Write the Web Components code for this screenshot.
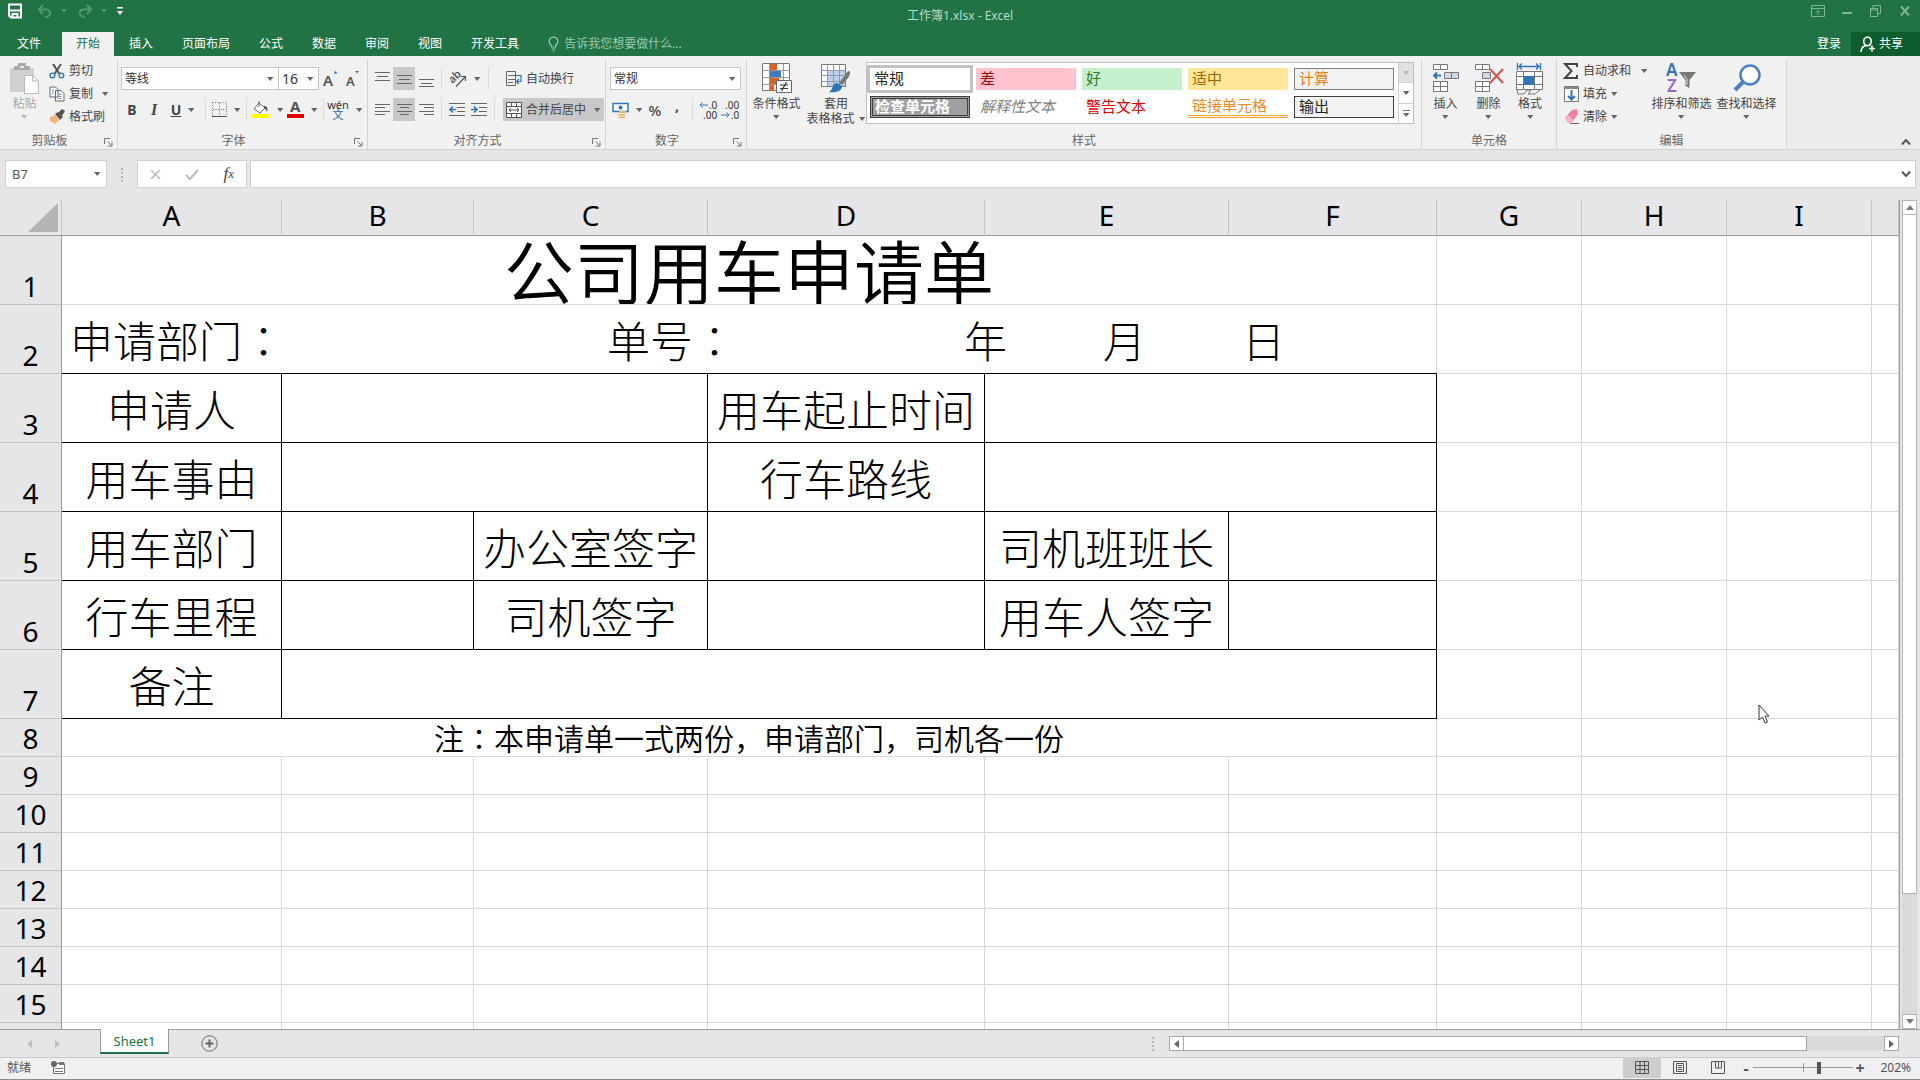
<!DOCTYPE html>
<html lang="zh-CN">
<head>
<meta charset="utf-8">
<title>工作簿1.xlsx - Excel</title>
<style>
  html, body { margin: 0; height: 100%; overflow: hidden; }
  body { font: 12px/16px "Noto Sans", "Noto Sans CJK SC", sans-serif; color: #444; background: #e6e6e6; }
</style>
</head>
<body>
<excel-app></excel-app>
<script>
const BASE = `
  *, *::before, *::after { box-sizing: border-box; }
  button, input, select { font: inherit; color: inherit; border: 0; background: none; padding: 0; margin: 0; border-radius: 0; outline: 0; }
  button { display: flex; align-items: center; justify-content: center; white-space: nowrap; flex: none; }
  svg { display: block; flex: none; }
`;

function define(name, css, html, init) {
  const tpl = document.createElement('template');
  tpl.innerHTML = `<style>${BASE}${css}</style>` + (typeof html === 'string' ? html : '');
  customElements.define(name, class extends HTMLElement {
    connectedCallback() {
      if (this.shadowRoot) return;
      const root = this.attachShadow({ mode: 'open' });
      root.append(tpl.content.cloneNode(true));
      if (typeof html === 'function') root.innerHTML += html(this);
      if (init) init(root, this);
    }
  });
}

/* name: [width, height, markup] */
const G = '#666', B = '#2f75b5';
const line = (d, c = G, w = 1) => `<path d="${d}" fill="none" stroke="${c}" stroke-width="${w}"/>`;
const glyph = (t, x, y, s, c, w = 700) => `<text x="${x}" y="${y}" fill="${c}" style="font:${w} ${s}px 'Noto Sans',sans-serif">${t}</text>`;
const ICONS = {
  save: [16, 16, `<path d="M2 1.5h12v13H4l-2-2z" fill="none" stroke="#fff" stroke-width="2"/><path d="M2 7.5h12M5.5 15v-4h5v4" fill="none" stroke="#fff" stroke-width="2"/>`],
  undo: [16, 14, line('M2 5.5h7.5a3.6 3.6 0 0 1 0 7.2H8', '#4f9a70', 2) + line('M6 1 1.8 5.5 6 10', '#4f9a70', 2)],
  redo: [16, 14, line('M14 5.5H6.5a3.6 3.6 0 0 0 0 7.2H8', '#4f9a70', 2) + line('M10 1l4.2 4.5L10 10', '#4f9a70', 2)],
  caretQ: [7, 4, `<path d="M0 0h6L3 4z" fill="#4f9a70"/>`],
  qat: [8, 8, `<path d="M1 0h6v1.5H1zM1 4h6L4 8z" fill="#fff"/>`],
  caret: [7, 4, `<path d="M0 0h6.400L3.200 4z" fill="#666"/>`],
  caretS: [7, 4, `<path d="M0 0h6.400L3.200 4z" fill="#bbb"/>`],
  caretU: [8, 5, `<path d="M0 5h8L4 0z" fill="#777"/>`],
  caretD: [8, 5, `<path d="M0 0h8L4 5z" fill="#777"/>`],
  caretL: [5, 8, `<path d="M5 0v8L0 4z" fill="#666"/>`],
  caretR: [5, 8, `<path d="M0 0v8l5-4z" fill="#666"/>`],
  navL: [5, 8, `<path d="M5 0v8L0 4z" fill="#bdbdbd"/>`],
  navR: [5, 8, `<path d="M0 0v8l5-4z" fill="#bdbdbd"/>`],
  ribopt: [14, 12, line('M.5.5h13v11H.5zM.5 3.5h13M7 10V5.5M5 7.5l2-2 2 2', '#7fb595')],
  min: [10, 12, line('M0 8h10', '#7fb595', 2)],
  restore: [11, 12, line('M.5 3.5h7v8h-7zM3 3V.5h7.5v8H8M.5 5h7', '#7fb595')],
  close: [10, 12, line('M1 1.5l8 9M9 1.5l-8 9', '#7fb595', 2)],
  bulb: [11, 16, line('M5.500 1a4.300 4.300 0 0 0-2.500 7.800l.5 2.200h4l.5-2.200A4.300 4.300 0 0 0 5.500 1zM3.500 13h4M4.500 15h2', '#9cc9ae', 1.2)],
  person: [16, 18, line('M7.500 2a3.800 4.400 0 1 1-.01 0zM1 17c.3-4.500 3-6.500 6-6.500M12 10.500v6M9 13.500h6', '#fff', 1.6)],
  paste: [30, 32, `<path d="M0 5h24v24H0z" fill="#d2cfd4"/><path d="M4 7V3h4V0h8v3h4v4z" fill="#aaa"/><path d="M10 3h4v2h-4z" fill="#eee"/><path d="M14.500 12.500h8l6 5.500v12.500h-14z" fill="#fff" stroke="#bbb"/><path d="M22.500 12.500V18h6" fill="none" stroke="#bbb"/>`],
  cut: [16, 16, line('M4 1l6.500 10M12 1 5.500 11', '#555', 2) + line('M1 12.500a2.400 2.400 0 1 0 4.800 0 2.400 2.400 0 1 0-4.800 0M10 12.500a2.400 2.400 0 1 0 4.800 0 2.400 2.400 0 1 0-4.800 0', B, 1.300)],
  copy: [16, 16, `<path d="M1 1h5.500L9 3.500V11H1zM6.500 4.500H12l3 3V15H6.500z" fill="#fff" stroke="#666"/>` + line('M3 4h2M3 6h2M3 8h2M8.500 8.500h4M8.500 10.500h4M8.500 12.500h4', '#7a9cc4')],
  brush: [16, 16, `<path d="M1 8l5-2 4 5-4 4-5-3z" fill="#f2b579"/><path d="M6 5l3-2 5 5-3 3z" fill="#555"/><path d="M9 4l4-4 3 2-3 5z" fill="#555"/>`],
  Aup: [15, 18, `<path d="M10.500 3.500l2-2.500 2 2.500z" fill="${B}"/>` + glyph('A', 0, 16, 15, '#555', 600)],
  Adn: [15, 18, `<path d="M10 1h4l-2 2.500z" fill="${B}"/>` + glyph('A', 1, 16, 13, '#555', 600)],
  border: [15, 15, `<path d="M.5.5h14v14H.5zM7.500 1v13M1 7.500h13" fill="none" stroke="#777" stroke-dasharray="1 1.500"/><path d="M0 14.500h15" stroke="#555"/>`],
  fill: [18, 18, `<path d="M0 13h17v4H0z" fill="#ffff00"/><path d="M7 2l6 5-5 5-6-4z" fill="#fff" stroke="#666"/><path d="M7 0v6" stroke="#666"/><path d="M12 5c3 0 4 2 3 6-1-2-1-3-3-4z" fill="#555"/>`],
  color: [17, 18, `<path d="M0 13h17v4H0z" fill="#e00000"/>` + glyph('A', 3, 11, 15, '#555')],
  alT: [15, 16, line('M0 1.500h15M2 5.500h11M0 9.500h15')],
  alM: [15, 16, line('M0 4.500h15M2 8.500h11M0 12.500h15')],
  alB: [15, 16, line('M0 8.500h15M2 12.500h11M0 15.500h15')],
  left: [15, 13, line('M0 1.500h15M0 4.500h10M0 8.500h15M0 11.500h10')],
  mid: [15, 13, line('M0 1.500h15M3 4.500h9M0 8.500h15M3 11.500h9')],
  right: [15, 13, line('M0 1.500h15M5 4.500h10M0 8.500h15M5 11.500h10')],
  orient: [17, 16, `<g transform="rotate(-45 6 8)">${glyph('ab', 0, 9, 11, '#555', 600)}</g>` + line('M6 15.500 15 6M15.500 10V5.500H11', '#555', 1.200)],
  outd: [16, 13, line('M0 .5h16M8 4.500h8M8 8.500h8M0 12.500h16') + line('M7 6.500H1M4 3.500 1 6.500l3 3', B, 1.600)],
  ind: [16, 13, line('M0 .5h16M8 4.500h8M8 8.500h8M0 12.500h16') + line('M0 6.500h6M3 3.500l3 3-3 3', B, 1.600)],
  wrap: [16, 16, line('M.5.5h9v14h-9zM2 4.500h10M2 8.500h8M2 11.500h5') + line('M12 4.500h3v6h-4M13 8l-2.500 2.500L13 13', B, 1.200)],
  merge: [16, 16, `<path d="M.5.5h15v15H.5z" fill="#fff" stroke="#555"/>` + line('M.5 4.500h15M.5 11.500h15M5.500.5v4M10.500.5v4M5.500 11.500v4M10.500 11.500v4M3 8h10M5 6 3 8l2 2M11 6l2 2-2 2', '#555')],
  money: [17, 16, `<path d="M1 1.500h15v8H1z" fill="#fff" stroke="${B}" stroke-width="1.500"/><circle cx="8.500" cy="5.500" r="2" fill="${B}"/><path d="M7 9h7v2H7zM6 12h7v1.500H6zM7 14.500h6V16H7z" fill="#f0b060"/>`],
  incd: [9, 6, line('M9 3H1M3.500.5 1 3l2.500 2.500', B)],
  decd: [9, 6, line('M0 3h8M5.500.5 8 3 5.500 5.500', B)],
  cond: [30, 30, `<path d="M.5.5h27v27H.5z" fill="#fff" stroke="#777"/>` + line('M.5 7.500h27M.5 14.500h27M.5 21.500h27M7.500.5v27M14.500.5v27M21.500.5v27', '#999') + `<path d="M8 1h7v6H8zM8 15h9v6H8zM8 22h4v6H8z" fill="#d9622b"/><path d="M8 8h11v6H8z" fill="#3f7fc0"/><path d="M14.500 17.500h15v12h-15z" fill="#fff" stroke="#666"/>` + line('M18 22h8M18 25.500h8M24.500 19l-5 9', '#333', 1.200)],
  tblfmt: [30, 30, `<path d="M.5 1.500h24v22H.5z" fill="#fff" stroke="#777"/><path d="M7 7h17v16H7z" fill="#bdd0ea"/>` + line('M.5 7.500h24M.5 12.500h24M.5 18.500h24M6.500 1.500v22M12.500 1.500v22M18.500 1.500v22', '#8a9ab0') + `<path d="M28 8c2 1 1 4-1 7l-6 7-3-2 6-8c1-2 3-4 4-4z" fill="#777"/><path d="M16 20l5 3c0 5-5 7-13 6 4-2 3-8 8-9z" fill="${B}"/>`],
  insert: [28, 29, `<path d="M1.500 1.500h14v5h-14zM1.500 18.500h14v10h-14z" fill="#fff" stroke="#777"/>` + line('M8.500 1.500v5M8.500 18.500v10M1.500 23.500h14', '#777') + `<path d="M12.500 9.500h14v6h-14z" fill="#cfd8e4" stroke="#777"/>` + line('M19.500 9.500v6', '#777') + line('M9 12.500H2M5 9.500l-3 3 3 3', B, 2)],
  del: [30, 29, `<path d="M1.500 1.500h14v5h-14zM1.500 18.500h14v10h-14z" fill="#fff" stroke="#777"/>` + line('M8.500 1.500v5M8.500 18.500v10M1.500 23.500h14', '#777') + `<path d="M8.500 9.500h8v6h-8z" fill="#cfd8e4" stroke="#777"/>` + line('M16 6l13 14M29 6 16 20', '#dc5340', 2)],
  format: [28, 32, line('M1.500 0v7M24.500 0v7M3 3.500h20M6 .5l-3 3 3 3M20 .5l3 3-3 3', B, 1.300) + `<path d="M.5 8.500h26v18H.5z" fill="#fff" stroke="#777"/>` + line('M.5 13.500h26M.5 21.500h26M7.500 8.500v18M18.500 8.500v18M1 27l1 4h6l3-4h4l-3 4h7l5-4', '#777') + `<path d="M8 13h10v9H8z" fill="${B}"/>`],
  sum: [16, 18, line('M14 5V2H2l6.500 7L2 16h12v-3', '#444', 2)],
  filldn: [15, 16, `<path d="M.5.5h14v15H.5z" fill="#fff" stroke="#777"/><path d="M1 1h13v2H1z" fill="#888"/>` + line('M7.500 4v9.500M4 10 7.500 13.500 11 10', B, 2)],
  erase: [15, 16, `<path d="M8 1l5-1 1 5-6 8H4l-3-4z" fill="#ee7fa2"/><path d="M1 9l4-3 4 5-2 3H4z" fill="#f5b3c8"/>` + line('M6 14.500h9', '#666')],
  sort: [32, 32, glyph('A', 0, 13, 17, B, 600) + glyph('Z', 1, 29, 17, '#9467bd', 600) + `<path d="M13 9h17l-6.500 8v8l-4-2v-6z" fill="#777"/>` + line('M18 12l3 4v6', '#ddd')],
  find: [30, 32, `<circle cx="18" cy="12" r="9.500" fill="#fff" stroke="#4a80c0" stroke-width="2.500"/>` + line('M11.500 18.500 3 27', '#4a80c0', 4)],
  launch: [9, 9, line('M.5 6V.5H6M3.500 3.500l4 4M8 4v4H4', '#777')],
  up: [10, 6, line('M1 5.500 5 1l4 4.500', '#555', 2)],
  down: [10, 6, line('M1 .5 5 5 9 .5', '#555', 2)],
  x: [11, 11, line('M1 1l9 9M10 1l-9 9', '#bbb', 1.600)],
  check: [14, 11, line('M1 6l4 4L13 1', '#bbb', 2)],
  plus: [17, 17, `<circle cx="8.500" cy="8.500" r="7.700" fill="none" stroke="#666"/>` + line('M8.500 4.500v8M4.500 8.500h8', '#666', 2)],
  dots: [3, 15, `<path d="M0 1h2v2H0zM0 5h2v2H0zM0 9h2v2H0zM0 13h2v2H0z" fill="#b5b5b5"/>`],
  macro: [14, 13, `<path d="M2.500 2.500h11v10h-11z" fill="#fff" stroke="#777"/><path d="M8 1h5v3H8z" fill="#777"/>` + line('M4 7.500h8M4 10.500h8', '#777') + `<circle cx="3" cy="3" r="3" fill="#666"/>`],
  vNorm: [14, 13, line('M.5.5h13v12H.5zM.5 4.500h13M.5 8.500h13M5 .5v12M9.500.5v12', '#555')],
  vPage: [14, 13, line('M.5.5h13v12H.5zM3.500 2.500h7v8h-7zM5 4.500h4M5 6.500h4M5 8.500h4', '#555')],
  vBreak: [14, 13, line('M.5.5h13v12H.5zM4.500.5v6.500h6V.5M7.500.5v6', '#555')],
  cursor: [12, 20, `<path d="M1 1v15l3.500-3 2.500 6 2.500-1-2.500-6H11z" fill="#fff" stroke="#333"/>`],
  all: [30, 29, `<path d="M30 0v29H0z" fill="#b4b4b6"/>`]
};
define('x-icon', ':host{display:block;flex:none}', el => {
  const [w, h, m] = ICONS[el.getAttribute('name')];
  return `<svg width="${w}" height="${h}" viewBox="0 0 ${w} ${h}" aria-hidden="true">${m}</svg>`;
});
const ic = n => `<x-icon name="${n}"></x-icon>`;

define('title-bar', `
  :host { display: grid; grid-template-columns: 1fr auto 1fr; height: 32px; color: #b9dcc6; }
  .q { display: flex; align-items: center; height: 22px; padding-left: 7px; }
  .q button { height: 22px; }
  .s { width: 16px; margin-right: 13px; } .u { gap: 8px; width: 32px; margin-right: 8px; }
  .t { padding-top: 8px; }
  .w { display: flex; justify-content: flex-end; height: 22px; padding-right: 1px; }
  .w button { width: 29px; height: 22px; }`,
  `<div class="q"><button class="s" aria-label="保存">${ic('save')}</button>
   <button class="u" aria-label="撤消">${ic('undo')}${ic('caretQ')}</button>
   <button class="u" aria-label="恢复">${ic('redo')}${ic('caretQ')}</button>
   <button aria-label="自定义快速访问工具栏">${ic('qat')}</button></div>
   <div class="t">工作簿1.xlsx - Excel</div>
   <div class="w"><button aria-label="功能区显示选项">${ic('ribopt')}</button><button aria-label="最小化">${ic('min')}</button><button aria-label="还原">${ic('restore')}</button><button aria-label="关闭">${ic('close')}</button></div>`);

define('ribbon-tabs', `
  :host { display: flex; height: 24px; gap: 1px; color: #fff; }
  button { padding: 0 14px 1px; height: 24px; }
  .file { width: 58px; margin-right: 3px; }
  .on { background: #f1f1f1; color: #217346; }
  label { display: flex; align-items: center; gap: 5px; flex: 1; margin-left: 14px; }
  input { width: 240px; color: #9cc9ae; } input::placeholder { color: #9cc9ae; opacity: 1; }
  .share { background: #0f5c2f; gap: 3px; width: 69px; padding: 0 8px 1px 0; }
  .login { padding: 0 9px 1px; }`,
  `<button class="file">文件</button><button class="on">开始</button><button>插入</button><button>页面布局</button><button>公式</button><button>数据</button><button>审阅</button><button>视图</button><button>开发工具</button>
   <label>${ic('bulb')}<input aria-label="操作说明搜索" placeholder="告诉我您想要做什么..."></label>
   <button class="login">登录</button><button class="share">${ic('person')}共享</button>`);

define('ribbon-group', `
  :host { display: flex; flex-direction: column; flex: none; height: 93px; padding-bottom: 1px; }
  .body { height: 73px; display: flex; }
  .foot { display: grid; grid-template-columns: 1fr 18px; align-items: center; text-align: center; height: 18px; color: #666; padding-bottom: 1px; }
  .foot.p { grid-template-columns: 1fr; }
  .foot button { height: 14px; padding-top: 4px; }
  .in { border-right: 1px solid #d4d4d6; margin: 3px 0 4px; flex: 1; display: flex; flex-direction: column; }`,
  el => {
    const l = el.getAttribute('label'), d = el.hasAttribute('launcher');
    return `<div class="in"><div class="body"><slot></slot></div><div class="foot ${d ? '' : 'p'}"><span>${l}</span>${d ? `<button aria-label="${l}设置">${ic('launch')}</button>` : ''}</div></div>`;
  });

/* Large button: icon over text, with a caret below or beside the last line */
define('big-button', `
  :host { display: block; flex: none; }
  button { flex-direction: column; justify-content: flex-start; width: 100%; height: 72px; padding-top: 4px; color: inherit; }
  .i { height: 33px; display: flex; align-items: flex-start; justify-content: center; }
  .c { height: 12px; display: flex; align-items: center; } .l { display: flex; align-items: center; gap: 4px; height: 15px; }`,
  el => {
    const [a, b] = el.getAttribute('label').split('|');
    return `<button><span class="i">${ic(el.getAttribute('icon'))}</span><span class="l">${a}</span>${b ? `<span class="l">${b}${ic('caret')}</span>` : `<span class="c">${ic(el.hasAttribute('dim') ? 'caretS' : 'caret')}</span>`}</button>`;
  });

define('row-button', `
  :host { display: block; } button { gap: 4px; height: 23px; } .i { width: 16px; display: flex; justify-content: center; } x-icon.c { margin-left: var(--cg, 0); }`,
  el => `<button><span class="i">${ic(el.getAttribute('icon'))}</span>${el.getAttribute('label')}${el.hasAttribute('menu') ? '<x-icon class="c" name="caret"></x-icon>' : ''}</button>`);

define('drop-box', `
  :host { display: flex; align-items: center; height: 23px; background: #fff; border: 1px solid #c6c6c8; padding-right: 4px; }
  select { appearance: none; flex: 1; min-width: 0; height: 21px; padding-left: 3px; font-size: var(--fs, 12px); color: #333; }`,
  el => `<select aria-label="${el.getAttribute('name')}"><option>${el.getAttribute('value')}</option></select>${ic('caret')}`);

/* Small tool: icon or text glyph, optional caret */
define('tool-button', `
  :host { display: block; flex: none; width: 22px; }
  button { width: 100%; height: 23px; gap: 7px; } :host([on]) button { background: #c8c8ca; }
  .b { font: bold 14px/20px "Noto Sans"; color: #444; } .i { font-family: "Liberation Serif"; font-size: 16px; font-style: italic; } .u { text-decoration: underline; }
  .p { font-size: 15px; font-weight: 500; } .k { padding-bottom: 8px; } .n { display: flex; flex-direction: column; font: 10px/10px "Noto Sans", "Noto Sans CJK SC"; color: #333; align-items: center; }
  .n span { display: flex; align-items: center; gap: 1px; } .r { align-items: flex-end; } .w { font-size: 11px; } .w span { color: #2f5fa5; }`,
  el => {
    const g = { B: '<span class="b">B</span>', I: '<span class="b i">I</span>', U: '<span class="b u">U</span>', pct: '<span class="b p">%</span>', comma: '<span class="b k">,</span>',
      inc: `<span class="n r"><span>${ic('incd')}.0</span><span>.00</span></span>`, dec: `<span class="n r"><span>.00</span><span>${ic('decd')}.0</span></span>`,
      wen: '<span class="n w">wén<span>文</span></span>' }[el.getAttribute('icon')];
    return `<button aria-label="${el.getAttribute('label')}">${g || ic(el.getAttribute('icon'))}${el.hasAttribute('menu') ? ic('caret') : ''}</button>`;
  });

define('style-gallery', `
  :host { display: flex; height: 62px; background: #fff; border: 1px solid #c0c0c4; margin-top: 3px; flex: none; }
  .g { display: grid; grid-template-columns: repeat(5, 100px); align-content: start; gap: 6px; padding: 5px 4px 4px 3px; }
  .g button { height: 22px; justify-content: flex-start; padding: 0 0 2px 4px; font-size: 15px; color: #222; }
  .sel { outline: 3px solid #c2c2c4; }
  .bad { background: #ffc3cf; } .g .bad { color: #9c0006; } .good { background: #c6efce; } .g .good { color: #2f7a2f; }
  .neu { background: #ffe699; } .g .neu { color: #9c6500; } .calc { background: #f2f2f2; }
  .g .calc { color: #ee7d15; border: 1px solid #7f7f7f; } .g .chk { background: #a0a0a2; border: 3px double #3f3f3f; color: #fff; font-weight: 700; padding-left: 2px; }
  .g .exp { font-style: italic; color: #7f7f7f; } .g .warn { color: #e00000; } .g .lnk { color: #ee8a2a; border-bottom: 3px double #f0a030; }
  .g .out { background: #f2f2f2; border: 1px solid #3f3f3f; }
  .s { display: flex; flex-direction: column; width: 15px; border-left: 1px solid #d0d0d2; }
  .s button { flex: 1; border-bottom: 1px solid #d0d0d2; flex-direction: column; gap: 2px; } .s button:first-child { background: #e1e1e3; } .s button:last-child { border: 0; }
  i { width: 7px; height: 1px; background: #777; }`,
  `<div class="g"><button class="sel">常规</button><button class="bad">差</button><button class="good">好</button><button class="neu">适中</button><button class="calc">计算</button>
   <button class="chk">检查单元格</button><button class="exp">解释性文本</button><button class="warn">警告文本</button><button class="lnk">链接单元格</button><button class="out">输出</button></div>
   <div class="s"><button aria-label="上一行">${ic('caretS')}</button><button aria-label="下一行">${ic('caret')}</button><button aria-label="其他"><i></i>${ic('caret')}</button></div>`);

const sep = m => `<i class="sep" style="margin:0 ${m}"></i>`;
define('excel-ribbon', `
  :host { display: flex; background: #f1f1f2; border-bottom: 1px solid #d0d0d3; height: 94px; color: #444; }
  .col { display: flex; flex-direction: column; } .row { display: flex; align-items: center; height: 23px; }
  .two { gap: 8px; padding-top: 8px; } .sep { width: 1px; height: 23px; background: #dcdcde; flex: none; }
  .clip { width: 118px; } .font { width: 250px; } .align { width: 238px; } .num { width: 141px; } .sty { width: 675px; } .cells { width: 135px; } .edit { width: 230px; }
  .merge { background: #c8c8ca; height: 23px; width: 101px; gap: 4px; justify-content: flex-start; padding-left: 3px; margin-left: 4px; }
  .wr { gap: 4px; margin-left: 7px; }
  .end { flex: 1; display: flex; justify-content: flex-end; align-items: flex-end; padding: 0 9px 4px; background: #ececed; }`,
  `<ribbon-group class="clip" label="剪贴板" launcher>
     <big-button style="width:49px;color:#aaa" icon="paste" label="粘贴" dim></big-button>
     <div class="col"><row-button icon="cut" label="剪切"></row-button><row-button icon="copy" label="复制" menu style="--cg:5px"></row-button><row-button icon="brush" label="格式刷"></row-button></div>
   </ribbon-group>
   <ribbon-group class="font" label="字体" launcher><div class="col two" style="padding-left:3px">
     <div class="row"><drop-box name="字体" value="等线" style="width:158px"></drop-box><drop-box name="字号" value="16" style="width:41px;--fs:14px;margin-left:-1px"></drop-box><tool-button icon="Aup" label="增大字号"></tool-button><tool-button icon="Adn" label="减小字号"></tool-button></div>
     <div class="row"><tool-button icon="B" label="加粗"></tool-button><tool-button icon="I" label="倾斜"></tool-button><tool-button icon="U" label="下划线" menu style="width:36px"></tool-button>${sep('4px')}<tool-button icon="border" label="边框" menu style="width:32px"></tool-button>${sep('4px')}<tool-button icon="fill" label="填充颜色" menu style="width:34px"></tool-button><tool-button icon="color" label="字体颜色" menu style="width:34px"></tool-button>${sep('4px')}<tool-button icon="wen" label="拼音指南" menu style="width:34px"></tool-button></div>
   </div></ribbon-group>
   <ribbon-group class="align" label="对齐方式" launcher><div class="col two" style="padding-left:3px">
     <div class="row"><tool-button icon="alT" label="顶端对齐"></tool-button><tool-button icon="alM" label="垂直居中" on></tool-button><tool-button icon="alB" label="底端对齐"></tool-button>${sep('4px')}<tool-button icon="orient" label="方向" menu style="width:38px"></tool-button>${sep('10px 0 4px')}<button class="wr">${ic('wrap')}自动换行</button></div>
     <div class="row"><tool-button icon="left" label="左对齐"></tool-button><tool-button icon="mid" label="居中" on></tool-button><tool-button icon="right" label="右对齐"></tool-button>${sep('4px')}<tool-button icon="outd" label="减少缩进量"></tool-button><tool-button icon="ind" label="增加缩进量"></tool-button>${sep('4px')}<button class="merge">${ic('merge')}合并后居中<x-icon name="caret" style="margin-left:4px"></x-icon></button></div>
   </div></ribbon-group>
   <ribbon-group class="num" label="数字" launcher><div class="col two" style="padding-left:4px">
     <div class="row"><drop-box name="数字格式" value="常规" style="width:131px"></drop-box></div>
     <div class="row"><tool-button icon="money" label="会计数字格式" menu style="width:34px"></tool-button><tool-button icon="pct" label="百分比样式"></tool-button><tool-button icon="comma" label="千位分隔样式"></tool-button>${sep('4px')}<tool-button icon="inc" label="增加小数位数"></tool-button><tool-button icon="dec" label="减少小数位数"></tool-button></div>
   </div></ribbon-group>
   <ribbon-group class="sty" label="样式">
     <big-button style="width:59px" icon="cond" label="条件格式"></big-button><big-button style="width:60px" icon="tblfmt" label="套用|表格格式"></big-button><style-gallery></style-gallery>
   </ribbon-group>
   <ribbon-group class="cells" label="单元格">
     <big-button style="width:47px" icon="insert" label="插入"></big-button><big-button style="width:39px" icon="del" label="删除"></big-button><big-button style="width:44px" icon="format" label="格式"></big-button>
   </ribbon-group>
   <ribbon-group class="edit" label="编辑"><div class="col" style="padding-left:6px;width:92px"><row-button icon="sum" label="自动求和" menu style="--cg:6px"></row-button><row-button icon="filldn" label="填充" menu></row-button><row-button icon="erase" label="清除" menu></row-button></div>
     <big-button style="width:65px" icon="sort" label="排序和筛选"></big-button><big-button style="width:65px" icon="find" label="查找和选择"></big-button>
   </ribbon-group>
   <div class="end"><button aria-label="折叠功能区">${ic('up')}</button></div>`);

define('formula-bar', `
  :host { display: flex; height: 50px; padding: 10px 4px 12px 5px; }
  .n, .f, .v { display: flex; align-items: center; background: #fff; border: 1px solid #cfcfd2; height: 28px; }
  .n { width: 102px; padding: 0 5px 0 6px; } .n input { flex: 1; min-width: 0; font-size: 13px; color: #555; }
  .d { display: flex; align-items: center; width: 30px; justify-content: center; }
  .f { width: 110px; justify-content: space-around; margin-right: 3px; } .fx { font: italic 17px/20px "Liberation Serif", serif; color: #444; }
  .fx small { font-size: 13px; } .v { flex: 1; padding-right: 4px; } .v input { flex: 1; height: 26px; }`,
  `<div class="n"><input aria-label="名称框" value="B7">${ic('caret')}</div><div class="d">${ic('dots')}</div>
   <div class="f"><button aria-label="取消">${ic('x')}</button><button aria-label="输入">${ic('check')}</button><button class="fx" aria-label="插入函数">f<small>x</small></button></div>
   <div class="v"><input aria-label="编辑栏"><button aria-label="展开编辑栏">${ic('down')}</button></div>`);

const COLS = { A: 220, B: 192, C: 234, D: 277, E: 244, F: 208, G: 145, H: 145, I: 145 };
const COLON = '<span class="c" lang="zh-TW">：</span>';
/* Each cell: [text, colspan, extra class] */
const ROWS = [
  [['公司用车申请单', 6, 'title']],
  [[`<span class="dept">申请部门${COLON}</span><span class="no">单号${COLON}</span><span class="y">年</span><span class="m">月</span><span>日</span>`, 6, 'line k']],
  [['申请人', 1, 'k'], ['', 2, 'k'], ['用车起止时间', 1, 'k'], ['', 2, 'k']],
  [['用车事由', 1, 'k'], ['', 2, 'k'], ['行车路线', 1, 'k'], ['', 2, 'k']],
  [['用车部门', 1, 'k'], ['', 1, 'k'], ['办公室签字', 1, 'k'], ['', 1, 'k'], ['司机班班长', 1, 'k'], ['', 1, 'k']],
  [['行车里程', 1, 'k'], ['', 1, 'k'], ['司机签字', 1, 'k'], ['', 1, 'k'], ['用车人签字', 1, 'k'], ['', 1, 'k']],
  [['备注', 1, 'k'], ['', 5, 'k']],
  [[`<span>注${COLON}本申请单一式两份，申请部门，司机各一份</span>`, 6, 'note']]
];
define('sheet-grid', `
  :host { display: block; flex: 1; min-width: 0; overflow: hidden; border-right: 1px solid #9a9aa0; background: #fff; }
  table { width: 100%; table-layout: fixed; border-collapse: separate; border-spacing: 0; color: #000; }
  th { font: 400 28px/35px "Noto Sans", sans-serif; padding: 0; background: #e6e6e8; border-right: 1px solid #c4c4c8; border-bottom: 1px solid #c4c4c8; }
  thead th { height: 36px; line-height: 31px; padding-bottom: 4px; border-bottom-color: #9a9aa0; }
  thead th:first-child { padding-bottom: 2px; } thead x-icon { margin: 1px 0 0 28px; }
  tbody th { border-right-color: #9a9aa0; vertical-align: bottom; }
  td { padding: 0; border-right: 1px solid #d6d6de; border-bottom: 1px solid #d6d6de; }
  td.k { border-right-color: #000; border-bottom-color: #000; } td.line { border-right-color: #d6d6de; }
  td div { height: 37px; overflow: hidden; display: flex; align-items: center; justify-content: center; white-space: nowrap; font: 300 43px/50px "Liberation Sans", "Noto Sans CJK SC", sans-serif; }
  .tall td div { height: 68px; padding-top: 7px; }
  .tall td.title div { font-size: 70px; line-height: 56px; padding-top: 12px; font-weight: 350; } td.note div { font-size: 30px; line-height: 33px; padding-top: 4px; font-weight: 350; }
  td.line div { justify-content: flex-start; padding-left: 8px; }
  .c { font-family: "Liberation Sans", "Noto Sans CJK TC", sans-serif; }
  .dept { width: 537px; } .no { width: 357px; } .y { width: 139px; } .m { width: 139px; }`,
  () => {
    let h = '<table><colgroup><col style="width:62px">' + Object.values(COLS).map(w => `<col style="width:${w}px">`).join('') + '<col></colgroup><thead><tr><th aria-label="全选">' + ic('all') + '</th>';
    h += Object.keys(COLS).map(c => `<th scope="col">${c}</th>`).join('') + '<th></th></tr></thead><tbody>';
    for (let r = 0; r < 16; r++) {
      const cells = ROWS[r] || Array(6).fill(['', 1, '']);
      h += `<tr class="${r < 7 ? 'tall' : ''}"><th scope="row">${r < 15 ? r + 1 : ''}</th>` + cells.map(([t, s, c]) => `<td colspan="${s}" class="${c}"><div>${t}</div></td>`).join('') + '<td></td>'.repeat(4) + '</tr>';
    }
    return h + '</tbody></table>';
  });

define('v-scroll', `
  :host { display: flex; flex-direction: column; width: 20px; padding: 0 3px 0 2px; background: #e6e6e8; flex: none; }
  button { height: 15px; background: #fff; border: 1px solid #b5b5b9; } .t { flex: 1; background: #dadadc; } .h { height: 85%; background: #fff; border: 1px solid #b5b5b9; border-top: 0; }`,
  `<button aria-label="向上滚动">${ic('caretU')}</button><div class="t"><div class="h"></div></div><button aria-label="向下滚动">${ic('caretD')}</button>`);

define('sheet-tabs', `
  :host { display: flex; height: 28px; border-top: 1px solid #9a9aa0; background: #e6e6e7; padding-right: 21px; }
  .nav { display: flex; width: 100px; padding-left: 15px; } .nav button { width: 28px; }
  .tab { width: 69px; height: 25px; margin-top: -1px; background: #fff; color: #217346; border: 1px solid #9a9aa0; border-top: 0; border-bottom: 2px solid #217346; font-size: 13px; }
  .add { width: 81px; } .d { display: flex; align-items: center; margin-left: auto; padding-right: 14px; }
  .h { display: flex; width: 730px; height: 15px; margin-top: 6px; } .h button { width: 15px; background: #fff; border: 1px solid #a6a6aa; }
  .t { flex: 1; background: #dadadc; } .b { width: 89%; height: 15px; background: #fff; border: 1px solid #a6a6aa; border-left: 0; }`,
  `<div class="nav"><button aria-label="上一张">${ic('navL')}</button><button aria-label="下一张">${ic('navR')}</button></div>
   <button class="tab">Sheet1</button><button class="add" aria-label="新工作表">${ic('plus')}</button><div class="d">${ic('dots')}</div>
   <div class="h"><button aria-label="向左滚动">${ic('caretL')}</button><div class="t"><div class="b"></div></div><button aria-label="向右滚动">${ic('caretR')}</button></div>`);

define('status-bar', `
  :host { display: flex; align-items: center; height: 23px; border-top: 1px solid #c9c9cc; border-bottom: 1px solid #8c8c90; background: #f0f0f2; padding: 0 8px 2px 7px; color: #555; }
  .m { margin-left: 20px; } .v { display: flex; margin: 0 2px 0 auto; } .v button { width: 38px; height: 21px; } .v .on { background: #cdcdd0; }
  .z { width: 14px; font: bold 16px/16px "Noto Sans"; }
  input { appearance: none; width: 100px; height: 16px; background: linear-gradient(#999, #999) center / 100% 1px no-repeat, linear-gradient(#999, #999) center / 1px 9px no-repeat; }
  input::-webkit-slider-thumb { appearance: none; width: 4px; height: 12px; background: #555; }
  output { width: 45px; text-align: right; padding-right: 1px; }`,
  `<span>就绪</span><button class="m" aria-label="宏录制">${ic('macro')}</button>
   <div class="v"><button class="on" aria-label="普通">${ic('vNorm')}</button><button aria-label="页面布局">${ic('vPage')}</button><button aria-label="分页预览">${ic('vBreak')}</button></div>
   <button class="z" aria-label="缩小">-</button><input type="range" min="0" max="100" value="67" aria-label="显示比例"><button class="z" aria-label="放大">+</button><output>202%</output>`);

define('excel-app', `
  :host { display: flex; flex-direction: column; height: 100vh; position: relative; overflow: hidden; }
  header { background: #217346; flex: none; } .main { flex: 1; min-height: 0; display: flex; }
  excel-ribbon, formula-bar, sheet-tabs, status-bar { flex: none; }
  .cur { position: absolute; left: 1758px; top: 704px; }`,
  `<header><title-bar></title-bar><ribbon-tabs></ribbon-tabs></header><excel-ribbon></excel-ribbon><formula-bar></formula-bar>
   <div class="main"><sheet-grid></sheet-grid><v-scroll></v-scroll></div><sheet-tabs></sheet-tabs><status-bar></status-bar><x-icon class="cur" name="cursor"></x-icon>`);
</script>
</body>
</html>
